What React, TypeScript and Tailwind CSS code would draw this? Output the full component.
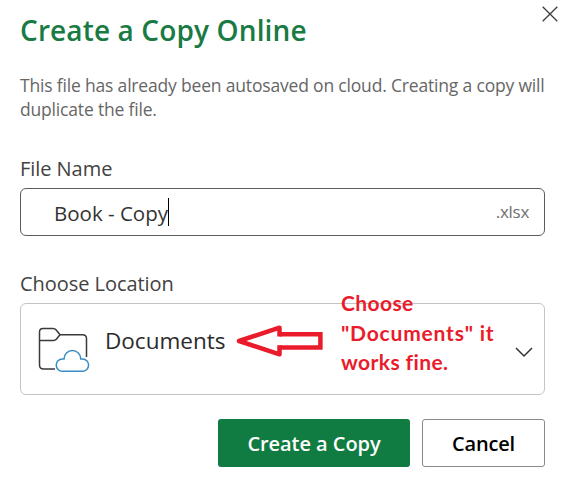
import React, { useState } from 'react';

function CloseIcon() {
  return (
    <svg width="18" height="18" viewBox="0 0 18 18" fill="none" stroke="#3b3b3b" strokeWidth="1.3">
      <path d="M1.7 1.7L16.3 16.3M16.3 1.7L1.7 16.3" />
    </svg>
  );
}

function CloudFolderIcon() {
  return (
    <svg width="54" height="48" viewBox="0 0 54 48" fill="none" strokeWidth="1.5" className="shrink-0">
      <path
        d="M19 44H7.5Q3.5 44 3.5 40V7Q3.5 3.5 7 3.5H17Q19 3.5 20.2 5L24 9.7H46.5Q50.5 9.7 50.5 13.7V32"
        stroke="#3a3a3a"
      />
      <path d="M3.5 15.5H17.5Q19.3 15.5 20.3 14.3L24 9.7" stroke="#3a3a3a" />
      <path
        d="M26.3 46.2A6.1 6.1 0 0 1 26.3 34H28A8.4 8.4 0 0 1 44.8 34H46.5A6.1 6.1 0 0 1 46.5 46.2Z"
        stroke="#3a8cc4"
      />
    </svg>
  );
}

function ChevronIcon() {
  return (
    <svg width="20" height="12" viewBox="0 0 20 12" fill="none" stroke="#333333" strokeWidth="1.5">
      <path d="M2 2L10 10L18 2" />
    </svg>
  );
}

function ArrowNote() {
  return (
    <div className="absolute left-[215px] top-[-16px] flex items-start text-[#ea1c2c]">
      <svg width="88" height="34" viewBox="0 0 88 34" fill="none" stroke="currentColor" strokeWidth="4.5" className="mt-9">
        <path d="M43.5 10.3H84.4V23.4H43.5" />
        <path d="M43.5 12.5V3.7L3 17L43.5 30.3V21.2" strokeLinejoin="round" />
      </svg>
      <p className="ml-[17px] whitespace-nowrap font-['Lato',sans-serif] text-[21px] font-bold leading-[29.5px] tracking-[0.4px]">
        Choose
        <br />
        <span className="tracking-[0.8px]">"Documents" it</span>
        <br />
        works fine.
      </p>
    </div>
  );
}

export default function App() {
  const [fileName] = useState('Book - Copy');

  return (
    <div className="relative h-[490px] w-[572px] overflow-hidden bg-white pl-5 pr-[27px] pt-3 font-['Open_Sans','Noto_Sans',sans-serif]">
      <button aria-label="Close" className="absolute right-[13px] top-[5px]">
        <CloseIcon />
      </button>

      <h1 className="whitespace-nowrap text-[28px] font-semibold leading-9 tracking-[0.13px] text-[#197b43]">
        Create a Copy Online
      </h1>
      <p className="mt-[25px] whitespace-nowrap text-[17.5px] leading-6 tracking-[-0.18px] text-[#666666]">
        This file has already been autosaved on cloud. Creating a copy will
        <br />
        duplicate the file.
      </p>

      <div className="mt-[34px] text-[20px] leading-7 tracking-[-0.05px] text-[#424242]">File Name</div>
      <div className="mt-[5px] flex h-12 items-center justify-between rounded-md border border-[#5c5c5c] pl-[33px] pr-[15px]">
        <div className="flex items-center pt-px">
          <span className="whitespace-nowrap text-[20.5px] leading-7 tracking-[0px] text-[#333333]">{fileName}</span>
          <span className="mb-0.5 h-7 w-px bg-black" />
        </div>
        <span className="text-[17px] leading-6 tracking-[-0.3px] text-[#707070]">.xlsx</span>
      </div>

      <div className="mt-[34px] text-[20px] leading-7 tracking-[-0.05px] text-[#424242]">Choose Location</div>
      <div className="relative mt-[5px] flex h-[92px] items-center rounded-md border border-[#c4c4c4] pl-[15px] pr-[10px]">
        <CloudFolderIcon />
        <span className="mb-4 ml-[15px] text-[22.5px] leading-8 tracking-[0px] text-[#2b2b2b]">Documents</span>
        <span className="ml-auto pt-[5px]">
          <ChevronIcon />
        </span>
        <ArrowNote />
      </div>

      <div className="mt-6 flex justify-end gap-3">
        <button className="h-12 w-[192px] whitespace-nowrap rounded-[3px] bg-[#107c41] pt-0.5 text-[20px] font-semibold tracking-[-0.05px] text-white">
          Create a Copy
        </button>
        <button className="h-12 w-[123px] rounded-[3px] border border-[#8a8a8a] bg-white pt-0.5 text-[20px] font-semibold tracking-[-0.2px] text-black">
          Cancel
        </button>
      </div>
    </div>
  );
}
